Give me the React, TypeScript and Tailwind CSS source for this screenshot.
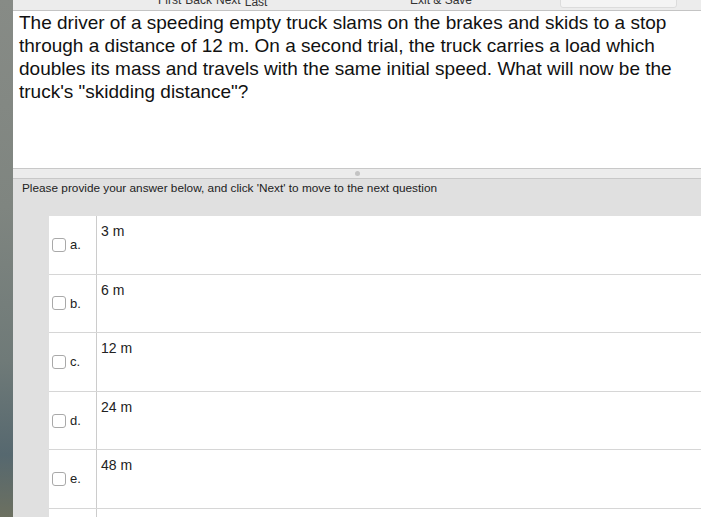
import React from "react";

const options = [
  { letter: "a.", text: "3 m" },
  { letter: "b.", text: "6 m" },
  { letter: "c.", text: "12 m" },
  { letter: "d.", text: "24 m" },
  { letter: "e.", text: "48 m" },
];

export default function App() {
  return (
    <div className="flex h-[517px] w-[701px] overflow-hidden bg-[#e0e0e0] [font-family:'Liberation_Sans',Arial,sans-serif]">
      <div className="h-full w-[13px] shrink-0 bg-[linear-gradient(180deg,#878b86_0%,#7f8580_40%,#6f7a78_70%,#56686f_88%,#6c7060_100%)]" />
      <div className="flex min-w-0 flex-1 flex-col">
        {/* top toolbar, mostly cut off */}
        <div className="relative h-[11px] shrink-0 overflow-hidden border-b border-[#c4c4c4] bg-[#ececec]">
          <div className="absolute left-[145px] top-[-9px] flex items-start gap-[4px] text-[12px] text-[#333]">
            <span>First</span>
            <span>Back</span>
            <span>Next</span>
            <span className="mt-[2px]">Last</span>
          </div>
          <div className="absolute left-[397px] top-[-9px] text-[12px] text-[#333]">Exit &amp; Save</div>
          <div className="absolute left-[547px] top-[-6px] h-[14px] w-[117px] rounded-[3px] border border-[#dcdcdc] bg-[#f4f4f4]" />
        </div>
        {/* question */}
        <div className="h-[157px] shrink-0 bg-white pl-[6px] pr-[10px] pt-[0px] text-[19px] leading-[23px] text-[#111]">
          The driver of a speeding empty truck slams on the brakes and skids to a stop through a distance of 12 m. On a second trial, the truck carries a load which doubles its mass and travels with the same initial speed. What will now be the truck's "skidding distance"?
        </div>
        {/* splitter */}
        <div className="flex h-[11px] shrink-0 items-center justify-center border-y border-[#c8c8c8] bg-[#ececec]">
          <div className="h-[5px] w-[5px] rounded-full bg-[#c4c4c4]" />
        </div>
        {/* instruction */}
        <div className="h-[37px] shrink-0 pl-[9px] pt-[1px] text-[11.8px] text-[#222]">
          Please provide your answer below, and click 'Next' to move to the next question
        </div>
        {/* options */}
        <div className="ml-[36px] flex flex-1 flex-col bg-white">
          {options.map((o) => (
            <div key={o.letter} className="flex h-[58.6px] shrink-0 border-b border-[#d6d6d6]">
              <div className="flex w-[48px] shrink-0 items-center border-r border-[#cccccc] pl-[3px]">
                <div className="h-[14px] w-[14px] rounded-[3px] border border-[#a9a9a9] bg-white" />
                <span className="ml-[4px] text-[13px] text-[#222]">{o.letter}</span>
              </div>
              <div className="pl-[4px] pt-[5px] text-[14px] text-[#222]">{o.text}</div>
            </div>
          ))}
          <div className="flex flex-1">
            <div className="w-[48px] shrink-0 border-r border-[#cccccc]" />
          </div>
        </div>
      </div>
    </div>
  );
}
